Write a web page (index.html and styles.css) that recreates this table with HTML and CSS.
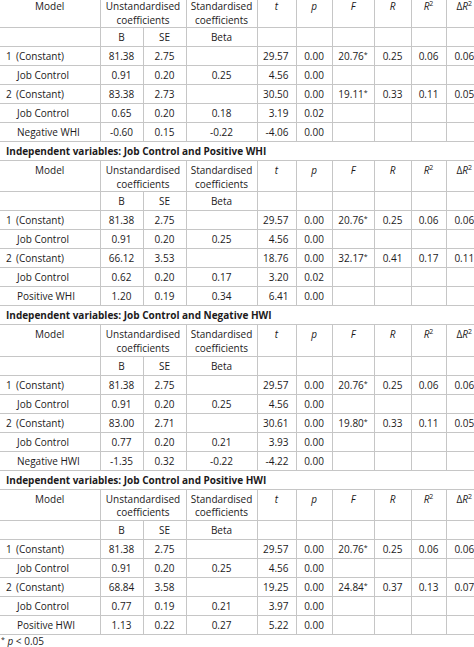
FILE: index.html
```html
<!DOCTYPE html>
<html>
<head>
<meta charset="utf-8">
<link rel="stylesheet" href="styles.css">
</head>
<body>
<div class="page">
<table class="reg">
<colgroup>
<col class="c-model"><col class="c-b"><col class="c-se"><col class="c-beta"><col class="c-t"><col class="c-p"><col class="c-f"><col class="c-r"><col class="c-r2"><col class="c-dr2">
</colgroup>
<tbody>
<tr class="hd"><td>Model</td><td colspan="2"><div class="l">Unstandardised</div><div class="l">coefficients</div></td><td><div class="l">Standardised</div><div class="l">coefficients</div></td><td><i>t</i></td><td><i>p</i></td><td><i>F</i></td><td><i>R</i></td><td><i>R</i><sup>2</sup></td><td>Δ<i>R</i><sup>2</sup></td></tr>
<tr class="sub"><td></td><td>B</td><td>SE</td><td>Beta</td><td></td><td></td><td></td><td></td><td></td><td></td></tr>
<tr><td class="m"><span class="n">1</span>(Constant)</td><td>81.38</td><td>2.75</td><td></td><td class="t">29.57</td><td>0.00</td><td>20.76<sup class="ast">*</sup></td><td>0.25</td><td>0.06</td><td>0.06</td></tr>
<tr><td class="m v">Job Control</td><td>0.91</td><td>0.20</td><td>0.25</td><td class="t">4.56</td><td>0.00</td><td></td><td></td><td></td><td></td></tr>
<tr><td class="m"><span class="n">2</span>(Constant)</td><td>83.38</td><td>2.73</td><td></td><td class="t">30.50</td><td>0.00</td><td>19.11<sup class="ast">*</sup></td><td>0.33</td><td>0.11</td><td>0.05</td></tr>
<tr><td class="m v">Job Control</td><td>0.65</td><td>0.20</td><td>0.18</td><td class="t">3.19</td><td>0.02</td><td></td><td></td><td></td><td></td></tr>
<tr><td class="m v">Negative WHI</td><td>-0.60</td><td>0.15</td><td>-0.22</td><td class="t">-4.06</td><td>0.00</td><td></td><td></td><td></td><td></td></tr>
<tr class="lbl"><td colspan="10">Independent variables: Job Control and Positive WHI</td></tr>
<tr class="hd"><td>Model</td><td colspan="2"><div class="l">Unstandardised</div><div class="l">coefficients</div></td><td><div class="l">Standardised</div><div class="l">coefficients</div></td><td><i>t</i></td><td><i>p</i></td><td><i>F</i></td><td><i>R</i></td><td><i>R</i><sup>2</sup></td><td>Δ<i>R</i><sup>2</sup></td></tr>
<tr class="sub"><td></td><td>B</td><td>SE</td><td>Beta</td><td></td><td></td><td></td><td></td><td></td><td></td></tr>
<tr><td class="m"><span class="n">1</span>(Constant)</td><td>81.38</td><td>2.75</td><td></td><td class="t">29.57</td><td>0.00</td><td>20.76<sup class="ast">*</sup></td><td>0.25</td><td>0.06</td><td>0.06</td></tr>
<tr><td class="m v">Job Control</td><td>0.91</td><td>0.20</td><td>0.25</td><td class="t">4.56</td><td>0.00</td><td></td><td></td><td></td><td></td></tr>
<tr><td class="m"><span class="n">2</span>(Constant)</td><td>66.12</td><td>3.53</td><td></td><td class="t">18.76</td><td>0.00</td><td>32.17<sup class="ast">*</sup></td><td>0.41</td><td>0.17</td><td>0.11</td></tr>
<tr><td class="m v">Job Control</td><td>0.62</td><td>0.20</td><td>0.17</td><td class="t">3.20</td><td>0.02</td><td></td><td></td><td></td><td></td></tr>
<tr><td class="m v">Positive WHI</td><td>1.20</td><td>0.19</td><td>0.34</td><td class="t">6.41</td><td>0.00</td><td></td><td></td><td></td><td></td></tr>
<tr class="lbl"><td colspan="10">Independent variables: Job Control and Negative HWI</td></tr>
<tr class="hd"><td>Model</td><td colspan="2"><div class="l">Unstandardised</div><div class="l">coefficients</div></td><td><div class="l">Standardised</div><div class="l">coefficients</div></td><td><i>t</i></td><td><i>p</i></td><td><i>F</i></td><td><i>R</i></td><td><i>R</i><sup>2</sup></td><td>Δ<i>R</i><sup>2</sup></td></tr>
<tr class="sub"><td></td><td>B</td><td>SE</td><td>Beta</td><td></td><td></td><td></td><td></td><td></td><td></td></tr>
<tr><td class="m"><span class="n">1</span>(Constant)</td><td>81.38</td><td>2.75</td><td></td><td class="t">29.57</td><td>0.00</td><td>20.76<sup class="ast">*</sup></td><td>0.25</td><td>0.06</td><td>0.06</td></tr>
<tr><td class="m v">Job Control</td><td>0.91</td><td>0.20</td><td>0.25</td><td class="t">4.56</td><td>0.00</td><td></td><td></td><td></td><td></td></tr>
<tr><td class="m"><span class="n">2</span>(Constant)</td><td>83.00</td><td>2.71</td><td></td><td class="t">30.61</td><td>0.00</td><td>19.80<sup class="ast">*</sup></td><td>0.33</td><td>0.11</td><td>0.05</td></tr>
<tr><td class="m v">Job Control</td><td>0.77</td><td>0.20</td><td>0.21</td><td class="t">3.93</td><td>0.00</td><td></td><td></td><td></td><td></td></tr>
<tr><td class="m v">Negative HWI</td><td>-1.35</td><td>0.32</td><td>-0.22</td><td class="t">-4.22</td><td>0.00</td><td></td><td></td><td></td><td></td></tr>
<tr class="lbl"><td colspan="10">Independent variables: Job Control and Positive HWI</td></tr>
<tr class="hd"><td>Model</td><td colspan="2"><div class="l">Unstandardised</div><div class="l">coefficients</div></td><td><div class="l">Standardised</div><div class="l">coefficients</div></td><td><i>t</i></td><td><i>p</i></td><td><i>F</i></td><td><i>R</i></td><td><i>R</i><sup>2</sup></td><td>Δ<i>R</i><sup>2</sup></td></tr>
<tr class="sub"><td></td><td>B</td><td>SE</td><td>Beta</td><td></td><td></td><td></td><td></td><td></td><td></td></tr>
<tr><td class="m"><span class="n">1</span>(Constant)</td><td>81.38</td><td>2.75</td><td></td><td class="t">29.57</td><td>0.00</td><td>20.76<sup class="ast">*</sup></td><td>0.25</td><td>0.06</td><td>0.06</td></tr>
<tr><td class="m v">Job Control</td><td>0.91</td><td>0.20</td><td>0.25</td><td class="t">4.56</td><td>0.00</td><td></td><td></td><td></td><td></td></tr>
<tr><td class="m"><span class="n">2</span>(Constant)</td><td>68.84</td><td>3.58</td><td></td><td class="t">19.25</td><td>0.00</td><td>24.84<sup class="ast">*</sup></td><td>0.37</td><td>0.13</td><td>0.07</td></tr>
<tr><td class="m v">Job Control</td><td>0.77</td><td>0.19</td><td>0.21</td><td class="t">3.97</td><td>0.00</td><td></td><td></td><td></td><td></td></tr>
<tr><td class="m v">Positive HWI</td><td>1.13</td><td>0.22</td><td>0.27</td><td class="t">5.22</td><td>0.00</td><td></td><td></td><td></td><td></td></tr>
</tbody>
</table>
<div class="note"><sup class="ast">*</sup> <i>p</i> &lt; 0.05</div>
</div>
</body>
</html>
```
FILE: styles.css
```css
html, body {
  margin: 0;
  padding: 0;
  background: #ffffff;
  overflow: hidden;
}
body {
  font-family: "Open Sans", "DejaVu Sans", sans-serif;
  font-size: 10px;
  color: #1c1a1b;
}
.page {
  width: 482px;
  margin-top: -3px;
}
.reg {
  border-collapse: collapse;
  table-layout: fixed;
  width: 482px;
}
.c-model { width: 100px; }
.c-b { width: 43px; }
.c-se { width: 43px; }
.c-beta { width: 71px; }
.c-t { width: 39px; }
.c-p { width: 36px; }
.c-f { width: 42px; }
.c-r { width: 37px; }
.c-r2 { width: 35px; }
.c-dr2 { width: 36px; }
.reg td {
  border-bottom: 1px solid #c6c6c6;
  padding: 0;
  height: 18px;
  line-height: 12px;
  text-align: center;
  vertical-align: middle;
  white-space: nowrap;
}
.reg td + td {
  border-left: 1px solid #c6c6c6;
}
.reg .hd td {
  height: 27px;
  padding-top: 3px;
  vertical-align: top;
  line-height: 13.6px;
}
.l {
  height: 13.6px;
}
.reg sup {
  font-size: 7px;
  line-height: 0;
  vertical-align: 4px;
}
.reg .ast {
  font-size: 7px;
  vertical-align: 3px;
}
.reg td.m {
  text-align: left;
  padding-left: 6px;
}
.reg td.v {
  padding-left: 17px;
}
.n {
  display: inline-block;
  width: 10px;
}
.reg td.t {
  text-align: right;
  padding-right: 7px;
}
.reg .lbl td {
  text-align: left;
  font-weight: bold;
  padding-left: 6px;
}
.note {
  padding-left: 1px;
  line-height: 11px;
  padding-top: 1px;
}
.note .ast {
  font-size: 7px;
  line-height: 0;
  vertical-align: 3px;
}
```
